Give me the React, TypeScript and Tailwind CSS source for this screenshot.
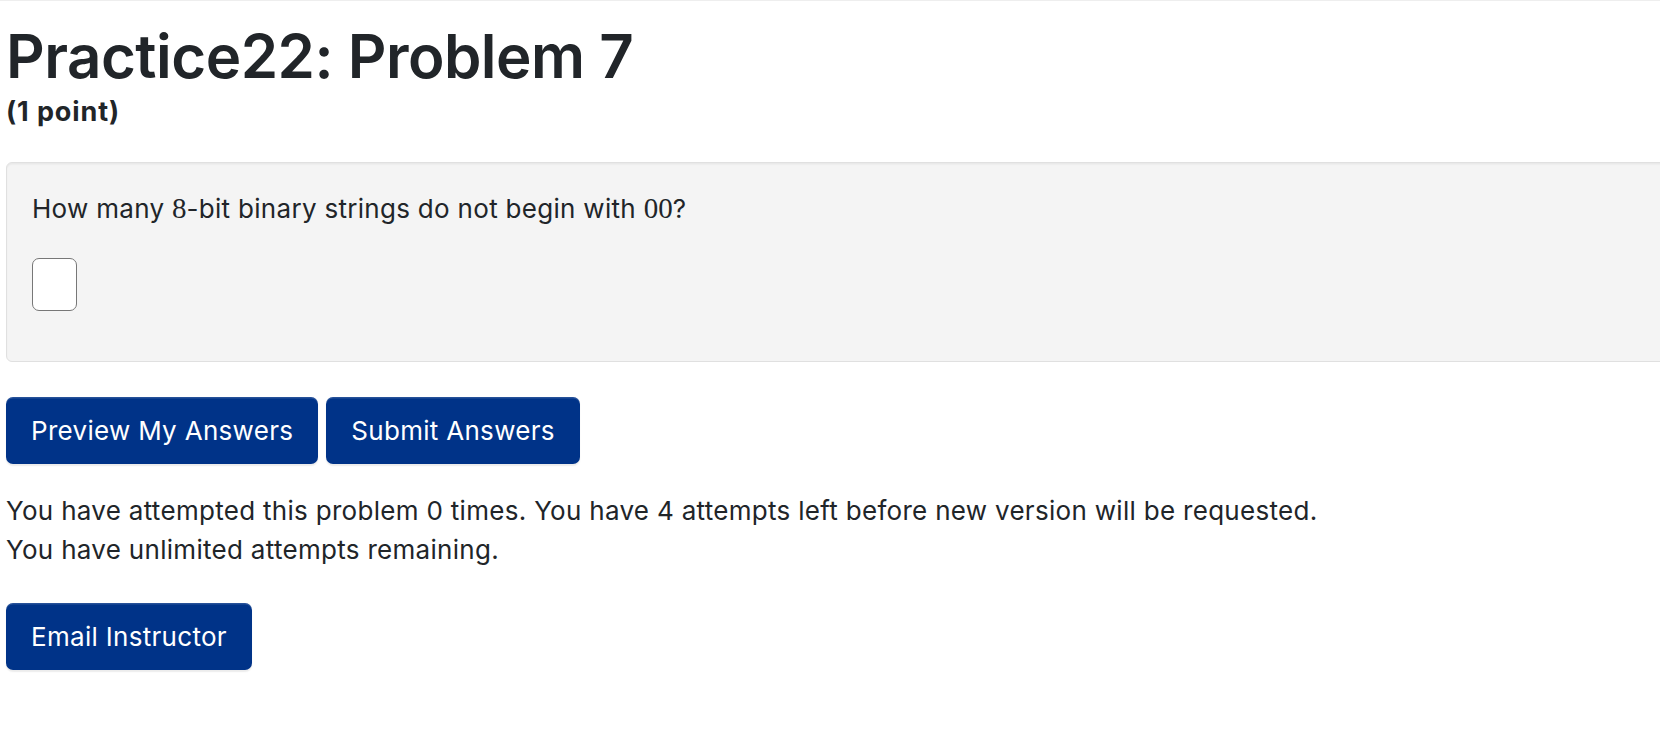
import React from 'react';

const sans = { fontFamily: 'Inter, "Noto Sans", sans-serif' };

const Math = ({ children }: { children: React.ReactNode }) => (
  <span className="font-['Liberation_Serif',serif] text-[29px] tracking-normal">{children}</span>
);

const Btn = ({ label }: { label: string }) => (
  <button className="h-[67px] px-[25px] rounded-[7px] bg-[#003388] text-white text-[26px] leading-[36px] tracking-[0.3px] shadow-[inset_0_1.5px_0_rgba(255,255,255,0.15),0_1.5px_1.5px_rgba(0,0,0,0.08)]">
    {label}
  </button>
);

export default function App() {
  return (
    <div
      className="w-[1660px] h-[756px] overflow-hidden bg-white text-[#212529] border-t border-[#eeeeee] font-['Inter','Noto_Sans',sans-serif]"
      style={sans}
    >
      <div className="pl-[6px]">
        {/* Heading */}
        <h1 className="mt-[19px] text-[60px] leading-[72px] font-semibold tracking-[-0.5px]">
          Practice22: Problem 7
        </h1>
        <div className="mt-[2px] text-[27px] leading-[36px] font-bold tracking-[0.9px]">(1 point)</div>

        {/* Problem body */}
        <div className="mt-[32px] w-[1700px] h-[200px] bg-[#f4f4f4] border border-[#e0e0e0] rounded-[6px] shadow-[inset_0_1.5px_1.5px_rgba(0,0,0,0.05)] pt-[27px] pl-[25px]">
          <p className="text-[26px] leading-[36px] tracking-[0.3px]">
            How many <Math>8</Math>-bit binary strings do not begin with <Math>00</Math>?
          </p>
          <div className="mt-[31px] w-[45px] h-[53px] bg-white border-[1.5px] border-[#777777] rounded-[7px]" />
        </div>

        {/* Actions */}
        <div className="mt-[35px] flex gap-[8px]">
          <Btn label="Preview My Answers" />
          <Btn label="Submit Answers" />
        </div>

        <div className="mt-[27px] text-[26px] leading-[39px] tracking-[0.3px]">
          <p>You have attempted this problem 0 times. You have 4 attempts left before new version will be requested.</p>
          <p>You have unlimited attempts remaining.</p>
        </div>

        <div className="mt-[34px]">
          <Btn label="Email Instructor" />
        </div>
      </div>
    </div>
  );
}
